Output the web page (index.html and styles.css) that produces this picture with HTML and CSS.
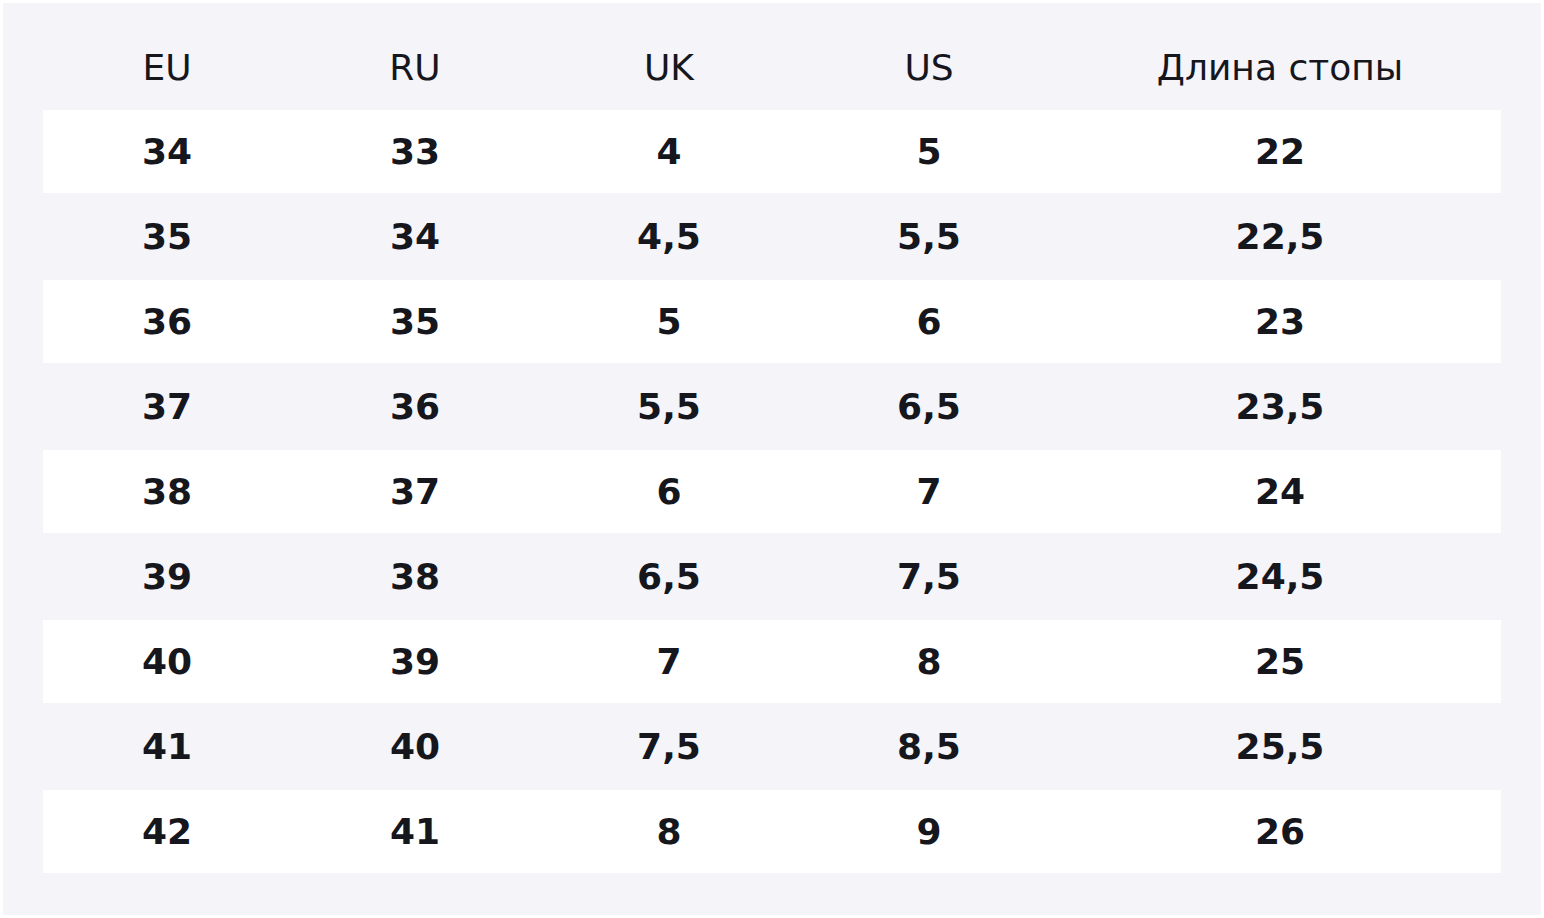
FILE: index.html
```html
<!DOCTYPE html>
<html lang="ru">
<head>
<meta charset="utf-8">
<title>Таблица размеров</title>
<link rel="stylesheet" href="styles.css">
</head>
<body>
<div class="panel">
  <div class="table">
    <div class="row head"><div>EU</div><div>RU</div><div>UK</div><div>US</div><div>Длина стопы</div></div>
    <div class="row odd"><div>34</div><div>33</div><div>4</div><div>5</div><div>22</div></div>
    <div class="row even"><div>35</div><div>34</div><div>4,5</div><div>5,5</div><div>22,5</div></div>
    <div class="row odd"><div>36</div><div>35</div><div>5</div><div>6</div><div>23</div></div>
    <div class="row even"><div>37</div><div>36</div><div>5,5</div><div>6,5</div><div>23,5</div></div>
    <div class="row odd"><div>38</div><div>37</div><div>6</div><div>7</div><div>24</div></div>
    <div class="row even"><div>39</div><div>38</div><div>6,5</div><div>7,5</div><div>24,5</div></div>
    <div class="row odd"><div>40</div><div>39</div><div>7</div><div>8</div><div>25</div></div>
    <div class="row even"><div>41</div><div>40</div><div>7,5</div><div>8,5</div><div>25,5</div></div>
    <div class="row odd"><div>42</div><div>41</div><div>8</div><div>9</div><div>26</div></div>
  </div>
</div>
</body>
</html>
```
FILE: styles.css
```css
html, body {
  margin: 0;
  background: #ffffff;
}
body {
  padding: 3px;
  font-family: "DejaVu Sans", sans-serif;
  color: #16161d;
}
.panel {
  width: 1538px;
  box-sizing: border-box;
  background: #f4f4f9;
  padding: 24px 40px 42px 40px;
}
.table {
  display: flex;
  flex-direction: column;
  gap: 2px;
}
.row {
  display: grid;
  grid-template-columns: 248px 248px 260px 260px 442px;
  height: 83px;
  align-items: center;
  text-align: center;
  font-size: 36px;
  font-weight: bold;
}
.row.head {
  height: 81px;
  font-weight: normal;
}
.row.odd {
  background: #ffffff;
}
.row.even {
  background: #f4f4f9;
}
```
